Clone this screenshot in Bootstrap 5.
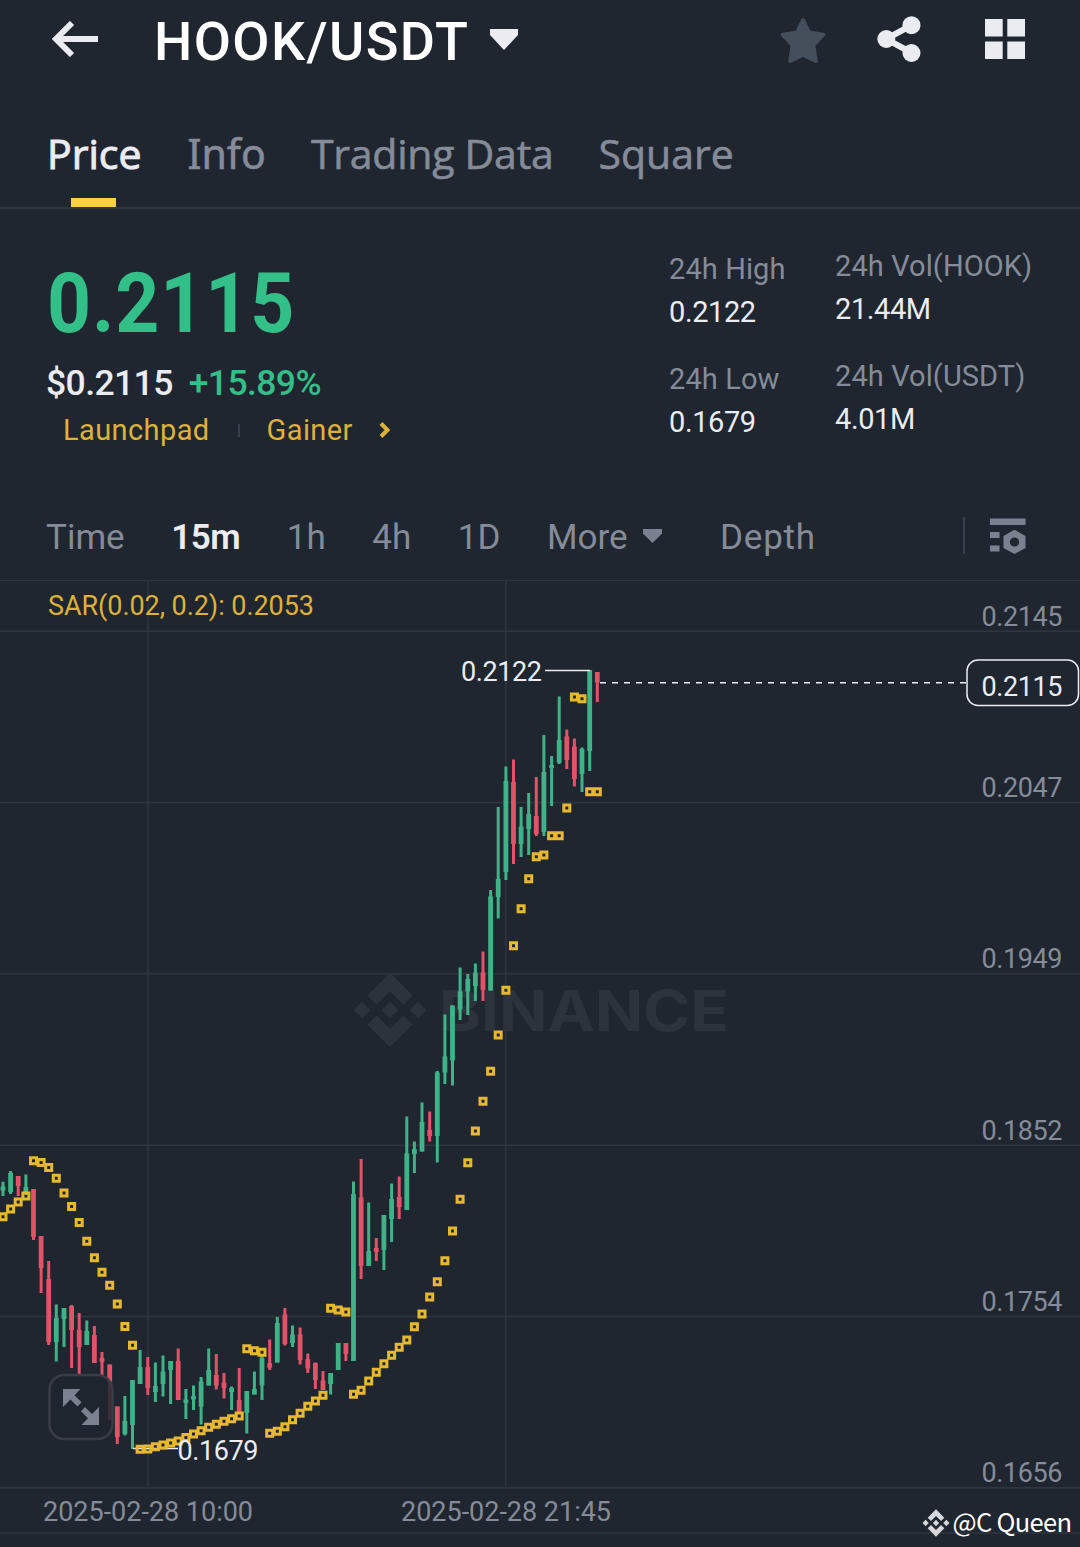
<!DOCTYPE html>
<html lang="en">
<head>
<meta charset="utf-8">
<meta name="viewport" content="width=device-width, initial-scale=1">
<title>HOOK/USDT</title>
<link href="https://cdn.jsdelivr.net/npm/bootstrap@5.3.0/dist/css/bootstrap.min.css" rel="stylesheet">
<style>
body{background:#1f262f;color:#eaecf2;font-family:Roboto,"Liberation Sans",sans-serif;width:1080px;height:1547px;overflow:hidden}
.dim{color:#858b98}
.gold{color:#dfb136}
.up{color:#33bf88}
svg{display:block;flex:none}
.topbar{height:83px;padding:0 55px 0 52px}
.topbar svg{margin-bottom:5px}
.pair{font-size:54px;line-height:1;font-weight:500;letter-spacing:1.4px;color:#fff;margin-left:56px}
.caret{margin-left:21px}
.tools svg{margin-bottom:6px}
.tools svg.star{margin-bottom:2px}
.tools svg + svg{margin-left:51px}
.tools svg.tiles{margin-left:64px}
.tabs{height:126px;border-bottom:2px solid #303640;padding-left:47px}
.tabs a{font-family:"Open Sans","Noto Sans",sans-serif;font-size:41px;line-height:140px;color:#858b98;text-decoration:none;white-space:nowrap;-webkit-text-stroke:.6px currentColor;margin-right:45px}
.tabs a.active{color:#eaecf2;position:relative;-webkit-text-stroke-width:1px}
.tabs a.active::after{content:"";position:absolute;left:24px;width:45px;top:115px;height:9px;background:#f9d33c}
.tabs a.info{font-family:"Noto Sans",sans-serif;letter-spacing:.1px;margin-left:1px}
.tabs a.wide{letter-spacing:-.25px}
.quote{height:283px;padding:36px 0 0 47px}
.last{font-size:84px;line-height:84px;font-weight:700;letter-spacing:1px;transform:scaleX(.915);transform-origin:0 0;white-space:nowrap;margin-top:17px}
.sub{font-size:35.500px;line-height:40px;font-weight:500;margin-top:17px;margin-left:-1px;gap:16px}
.sub span{letter-spacing:-.6px}
.tags{font-size:29px;line-height:40px;margin-top:7px;padding-left:16px;letter-spacing:.4px}
.tick{width:2px;height:13px;background:#39404b;margin:0 27px 0 28px}
.chev{margin-left:26px}
.stats{width:411px}
.stats .first-col{width:166px;padding-top:3px}
.stat{font-size:29px;line-height:43px;white-space:nowrap}
.stat + .stat{margin-top:23.500px}
.stat .dim{letter-spacing:.1px}
.stat b{font-weight:400;display:block;letter-spacing:-.4px}
.frames{height:88px;padding:4px 54px 0 46px;font-size:35px;white-space:nowrap;gap:46.500px}
.frames .now{font-weight:600;color:#eaecf2;letter-spacing:-.4px}
.more{gap:15px;margin-right:12px}
.depth{letter-spacing:.8px}
.frames .lift{margin-bottom:5px}
.vbar{width:2px;height:37px;background:#3a404b;margin-right:-21px}
text{font-family:Roboto,"Liberation Sans",sans-serif;font-size:27px}
</style>
</head>
<body>
<header class="topbar d-flex align-items-center">
  <svg width="46" height="36" viewBox="0 0 46 36" fill="none" stroke="#eaecf2" stroke-width="6"><path d="M20 2L4 18l16 16M4 18h42"/></svg>
  <div class="pair">HOOK/USDT</div>
  <svg class="caret" width="28" height="21" viewBox="0 0 28 21" fill="#eaecf2"><path d="M0 0h28v6L14 21 0 6z"/></svg>
  <div class="tools ms-auto d-flex align-items-center">
    <svg class="star" width="46" height="47" viewBox="0 0 46 47" fill="#454e5b" stroke="#454e5b" stroke-width="4" stroke-linejoin="round"><path d="M23 3l6 12.500 14.300 2.200-10 10.300 2.500 16-12.800-6.200L10.200 44l2.500-16-10-10.300L17 15.500z"/></svg>
    <svg width="44" height="46" viewBox="0 0 44 46" fill="#eaecf2"><path d="M35 9L9 23l26 14" fill="none" stroke="#eaecf2" stroke-width="6"/><circle cx="34.500" cy="9.200" r="9"/><circle cx="9.300" cy="23" r="9"/><circle cx="34.500" cy="37" r="9"/></svg>
    <svg class="tiles" width="40" height="40" viewBox="0 0 40 40" fill="#eaecf2"><path d="M0 0h17.700v17.500H0zM22.300 0H40v17.500H22.300zM0 22.500h17.700V40H0zM22.300 22.500H40V40H22.300z"/></svg>
  </div>
</header>
<nav class="tabs d-flex">
  <a class="active" href="#">Price</a><a class="info" href="#">Info</a><a class="wide" href="#">Trading Data</a><a href="#">Square</a>
</nav>
<section class="quote d-flex justify-content-between">
  <div>
    <div class="last up">0.2115</div>
    <div class="sub d-flex"><span>$0.2115</span><span class="up">+15.89%</span></div>
    <div class="tags gold d-flex align-items-center"><span>Launchpad</span><i class="tick"></i><span>Gainer</span>
      <svg class="chev" width="12" height="16" viewBox="0 0 12 16" fill="none" stroke="#dfb136" stroke-width="4"><path d="M2 1.500L8.500 8 2 14.500"/></svg>
    </div>
  </div>
  <div class="stats d-flex">
    <div class="first-col">
      <div class="stat"><span class="dim">24h High</span><b>0.2122</b></div>
      <div class="stat"><span class="dim">24h Low</span><b>0.1679</b></div>
    </div>
    <div>
      <div class="stat"><span class="dim">24h Vol(HOOK)</span><b>21.44M</b></div>
      <div class="stat"><span class="dim">24h Vol(USDT)</span><b>4.01M</b></div>
    </div>
  </div>
</section>
<div class="frames dim d-flex align-items-center">
  <span>Time</span><span class="now">15m</span><span>1h</span><span>4h</span><span>1D</span>
  <span class="more d-flex align-items-center">More <svg width="19" height="14" viewBox="0 0 19 14" style="margin-bottom:5px" fill="#7b8190"><path d="M0 0h19v4.500L9.500 14 0 4.500z"/></svg></span>
  <span class="depth">Depth</span>
  <i class="vbar ms-auto lift"></i>
  <svg class="lift" width="36" height="37" viewBox="0 0 36 37" fill="#7b8190"><path d="M0 1.500h35.500V8H0zM0 15h9.500v6H0zM0 28.500h9.500v6H0z"/><path fill-rule="evenodd" d="M24.500 12.800l11 6.200v12L24.500 37l-11-6V19zM24.500 20.400a4.600 4.600 0 1 0 .01 0z"/></svg>
</div>
<svg width="1080" height="967" viewBox="0 580 1080 967">
  <path stroke="#303640" stroke-width="1.500" fill="none" d="M0 580.500H1080M0 631.200H1080M0 802.500H1080M0 973.800H1080M0 1145.200H1080M0 1316.500H1080M0 1487.800H1080M0 1533H1080M148 581V1488M505.800 581V1488"/>
  <g fill="#2d333d">
    <path d="M390 973l22.500 22.500-9 9L390 991l-13.500 13.500-9-9zM390 1047l22.500-22.500-9-9L390 1029l-13.500-13.500-9 9zM362 1001.500l8.500 8.500-8.500 8.500-8.500-8.500zM418 1001.500l8.500 8.500-8.500 8.500-8.500-8.500zM390 1001.500l8.500 8.500-8.500 8.500-8.500-8.500z"/>
    <text x="439" y="1031" textLength="290" lengthAdjust="spacingAndGlyphs" style="font:700 57px Inter,sans-serif">BINANCE</text>
  </g>
  <g id="candles" fill="none"></g>
  <path d="M545 670.500H590M133 1448.500H178" stroke="#eaecf2" stroke-width="1.600"/>
  <path d="M600 682.700H966" stroke="#eaecf2" stroke-width="1.600" stroke-dasharray="6 6"/>
  <path id="sar" fill="none" stroke="#e8b92f" stroke-width="3"/>
  <rect x="49.500" y="1375" width="63" height="64" rx="15" fill="#1f262f" fill-opacity=".82" stroke="#383d48" stroke-width="2.500"/>
  <path d="M63 1389h17.500l-6 6.200 7 7-4 4.200-7-7-7.500 7.600zM99 1425H81.500l6.500-6.700-7-7 4-4.200 7 7 7-7.100z" fill="#7b8190"/>
  <rect x="967" y="660" width="111.500" height="45.500" rx="11" fill="#1f262f" stroke="#eaecf2" stroke-width="1.500"/>
  <g fill="#858b98">
    <text x="981.500" y="626" textLength="81">0.2145</text>
    <text x="981.500" y="797" textLength="81">0.2047</text>
    <text x="981.500" y="968" textLength="81">0.1949</text>
    <text x="981.500" y="1139.500" textLength="81">0.1852</text>
    <text x="981.500" y="1311" textLength="81">0.1754</text>
    <text x="981.500" y="1482" textLength="81">0.1656</text>
    <text x="43" y="1521" textLength="210">2025-02-28 10:00</text>
    <text x="401" y="1521" textLength="210">2025-02-28 21:45</text>
  </g>
  <g fill="#eaecf2">
    <text x="981.500" y="696" textLength="81">0.2115</text>
    <text x="461" y="681" textLength="81">0.2122</text>
    <text x="177.500" y="1460" textLength="81">0.1679</text>
  </g>
  <text x="48" y="615" textLength="266" fill="#dfb136">SAR(0.02, 0.2): 0.2053</text>
  <path fill="#d5d7da" transform="translate(936 1523) scale(.37) translate(-390 -1010)" d="M390 973l22.500 22.500-9 9L390 991l-13.500 13.500-9-9zM390 1047l22.500-22.500-9-9L390 1029l-13.500-13.500-9 9zM362 1001.500l8.500 8.500-8.500 8.500-8.500-8.500zM418 1001.500l8.500 8.500-8.500 8.500-8.500-8.500zM390 1001.500l8.500 8.500-8.500 8.500-8.500-8.500z"/>
  <text x="952.500" y="1532" textLength="119.500" fill="#fff" style="font-family:'Noto Sans CJK SC',sans-serif;font-size:25.500px">@C Queen</text>
</svg>
<script src="https://cdn.jsdelivr.net/npm/bootstrap@5.3.0/dist/js/bootstrap.bundle.min.js"></script>
<script>
// Each candle: direction, wick top, body top, body bottom, wick bottom
const candles = `g 1181.7 1186.5 1190.5 1196|g 1171 1173 1192 1194|r 1176 1176 1186 1196|g 1174.5 1187 1194 1195|r 1189 1189 1237 1240|r 1236 1236 1268 1293|r 1261 1279 1342 1345|g 1304.5 1318 1342 1361.5|g 1308 1308 1319 1347|r 1305 1306 1330 1368|r 1313 1330 1347 1374|g 1320.5 1331 1345 1345|r 1326 1335 1363 1363|r 1352 1358 1362 1375|r 1364.5 1364.5 1382 1420|r 1406.5 1406.5 1437 1444|g 1396 1421 1434 1435.5|g 1380 1380 1425 1449|g 1350 1367 1384 1384|r 1357 1367 1388 1395|g 1362.5 1386 1392 1402|g 1355.5 1371.5 1384 1396.5|g 1361 1361 1370 1404|r 1348.5 1361 1400 1400|g 1389 1399.5 1403 1419|g 1385.5 1396 1399.5 1410|g 1377 1381.5 1406.5 1424.5|g 1348.5 1370 1385.5 1385.5|r 1354 1375 1385.5 1389.5|r 1373 1382.5 1388 1398.5|g 1386.5 1388 1392 1410|r 1368 1400 1412 1412|g 1391 1391 1413 1433.5|g 1371.5 1389 1394.5 1394.5|g 1355 1358 1385.5 1400|r 1339.5 1363 1367.5 1370|g 1317 1323 1362.5 1362.5|r 1308 1314.5 1344 1345.5|g 1325.5 1334.5 1343 1347|r 1327.5 1334.5 1360 1364.5|r 1353.5 1359 1368.5 1373|r 1362.5 1363 1380 1389|r 1371 1380.5 1390 1390|g 1373 1373 1384 1394.5|g 1343 1343 1370 1370|r 1343 1343 1354 1361|g 1181.5 1194 1361 1361|r 1159 1197.5 1266 1279|g 1202.5 1251 1266 1266|r 1238 1248 1252 1261|g 1215 1215 1250 1270|g 1183.5 1199 1219 1242|r 1176.5 1197 1207 1219|g 1116.5 1153.5 1210 1210|g 1141.5 1149 1154 1173|g 1102.5 1122 1151.5 1151.5|r 1111.5 1130 1136 1141.5|g 1071 1072.5 1136 1162.5|g 1014.5 1056.5 1072.5 1084|g 1005.5 1005.5 1060.5 1085.5|g 967.5 991.5 1009.5 1020|g 974 979 991.5 1015|g 963.5 972.5 986 1001|r 951.5 972.5 990 1001|g 890 896.5 990.5 990.5|g 807 879 897 918.5|g 766.5 781 872 880|r 759.5 782 844 864|g 807 826.5 844 857|g 793 814 829 855|r 777 816 834 836|g 735 772 832 836|g 756 765 768 806|g 696.5 740 762.5 764|r 729.5 736.5 760 769|r 738.5 746.5 779 786.5|g 747.5 749 774 792|g 670 670 751 771|r 672 672 682.5 702`.split('|');
const sar = [1216.7,1209,1202,1196,1160.7,1162.5,1167.5,1178.3,1193,1206.5,1222.5,1241.3,1257.7,1272.3,1285.3,1304,1326.5,1345.3,1449.3,1449,1446.7,1445,1443,1441,1437.5,1434,1430.7,1427.3,1424.3,1421.3,1418.7,1416,1348.7,1350.7,1352.3,1433.3,1431.3,1426.7,1419.7,1413.3,1406.3,1401,1395.3,1308.3,1310,1312,1394.3,1390.3,1381,1372.3,1363.7,1355.3,1347.3,1340,1326.7,1314,1297,1281.7,1260.7,1231,1199.3,1162.7,1131,1101.3,1071.3,1035,990.3,945.7,908.7,878.7,856.7,855,835.7,835.7,808,697,698.7,791.7,791.7];
const x = i => +(3 + 7.619 * i).toFixed(1);
const paths = {g:['',''], r:['','']};
candles.forEach((c, i) => {
  const [d, a, b, e, f] = c.split(' ');
  paths[d][0] += `M${x(i)} ${a}V${f}`;
  paths[d][1] += `M${x(i)} ${b}V${e}`;
});
document.getElementById('candles').innerHTML = [['g', '#40b288'], ['r', '#e25268']].map(([d, col]) =>
  `<path d="${paths[d][0]}" stroke="${col}" stroke-width="3"/><path d="${paths[d][1]}" stroke="${col}" stroke-width="4.800"/>`).join('');
document.getElementById('sar').setAttribute('d', sar.map((y, i) => `M${x(i) - 3} ${y - 3}h6v6h-6z`).join(''));
</script>
</body>
</html>
